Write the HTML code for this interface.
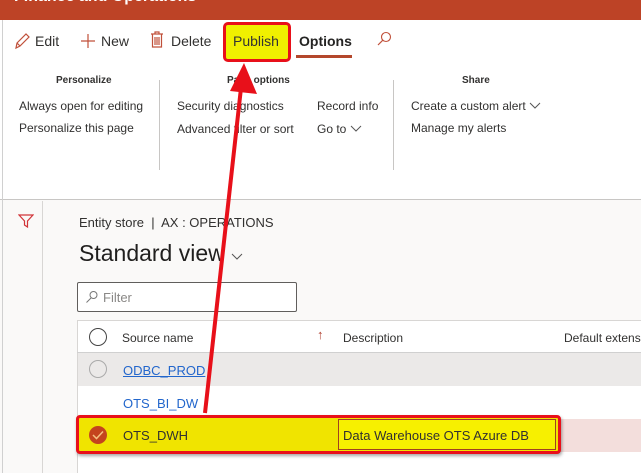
<!DOCTYPE html><html><head><style>
*{margin:0;padding:0;box-sizing:border-box}
body{width:641px;height:473px;overflow:hidden;background:#faf9f8;font-family:"Liberation Sans",sans-serif;position:relative;color:#323130}
.a{position:absolute;white-space:nowrap}
</style></head><body>
<div class="a" style="left:0;top:0;width:641px;height:20px;background:#bd4326"></div>
<div class="a" style="left:14px;top:-12px;color:#fff;font-size:16px;font-weight:bold">Finance and Operations</div>
<div class="a" style="left:0;top:20px;width:641px;height:180px;background:#fff;border-bottom:1px solid #c8c6c4"></div>
<div class="a" style="left:2px;top:20px;width:1px;height:453px;background:#d0d0d0"></div>
<svg class="a" style="left:14px;top:32px" width="16" height="18"><path d="M2 16 L3 11 L12 2 L15 5 L6 14 Z M3 11 L6 14" fill="none" stroke="#c0503a" stroke-width="1.2"/></svg>
<div class="a" style="left:35px;top:33px;font-size:14px">Edit</div>
<svg class="a" style="left:80px;top:33px" width="16" height="16"><path d="M8 1V15M1 8H15" stroke="#c0503a" stroke-width="1.2"/></svg>
<div class="a" style="left:101px;top:33px;font-size:14px">New</div>
<svg class="a" style="left:150px;top:31px" width="14" height="18"><path d="M1 3H13M5 3V1H9V3M2.5 3V16H11.5V3M5 6V14M7 6V14M9 6V14" fill="none" stroke="#c0503a" stroke-width="1.2"/></svg>
<div class="a" style="left:171px;top:33px;font-size:14px">Delete</div>
<div class="a" style="left:223px;top:22px;width:68px;height:40px;background:#f0f000;border:3px solid #e8101a;border-radius:5px"></div>
<div class="a" style="left:233px;top:33px;font-size:14px;color:#333">Publish</div>
<div class="a" style="left:299px;top:33px;font-size:14px;font-weight:bold;color:#252423">Options</div>
<div class="a" style="left:296px;top:55px;width:56px;height:3px;background:#b4472c"></div>
<svg class="a" style="left:376px;top:31px" width="16" height="16"><circle cx="10" cy="6" r="4.5" fill="none" stroke="#c0503a" stroke-width="1.1"/><path d="M7 9L2 14" stroke="#c0503a" stroke-width="1.2"/></svg>
<div class="a" style="left:56px;top:75px;font-size:10px;font-weight:bold">Personalize</div>
<div class="a" style="left:19px;top:99px;font-size:12px">Always open for editing</div>
<div class="a" style="left:19px;top:121px;font-size:12px">Personalize this page</div>
<div class="a" style="left:159px;top:80px;width:1px;height:90px;background:#c8c6c4"></div>
<div class="a" style="left:227px;top:75px;font-size:10px;font-weight:bold">Page options</div>
<div class="a" style="left:177px;top:99px;font-size:12px">Security diagnostics</div>
<div class="a" style="left:177px;top:122px;font-size:12px">Advanced filter or sort</div>
<div class="a" style="left:317px;top:99px;font-size:12px">Record info</div>
<div class="a" style="left:317px;top:122px;font-size:12px">Go to <svg width="12" height="8"><path d="M1 1L6 6L11 1" fill="none" stroke="#555"/></svg></div>
<div class="a" style="left:393px;top:80px;width:1px;height:90px;background:#c8c6c4"></div>
<div class="a" style="left:462px;top:75px;font-size:10px;font-weight:bold">Share</div>
<div class="a" style="left:411px;top:99px;font-size:12px">Create a custom alert <svg width="12" height="8"><path d="M1 1L6 6L11 1" fill="none" stroke="#555"/></svg></div>
<div class="a" style="left:411px;top:121px;font-size:12px">Manage my alerts</div>
<div class="a" style="left:42px;top:201px;width:1px;height:272px;background:#d8d6d4"></div>
<svg class="a" style="left:18px;top:213px" width="16" height="16"><path d="M1 2H15L9.5 8V14L6.5 12V8Z" fill="none" stroke="#d13438" stroke-width="1.2"/></svg>
<div class="a" style="left:79px;top:215px;font-size:13px;color:#323130">Entity store &nbsp;|&nbsp; AX : OPERATIONS</div>
<div class="a" style="left:79px;top:240px;font-size:23px;color:#201f1e">Standard view <svg width="12" height="8"><path d="M1 1L6 6L11 1" fill="none" stroke="#555"/></svg></div>
<div class="a" style="left:77px;top:282px;width:220px;height:30px;background:#fff;border:1px solid #605e5c;border-radius:2px"></div>
<svg class="a" style="left:85px;top:290px" width="14" height="14"><circle cx="8.5" cy="5" r="3.5" fill="none" stroke="#777"/><path d="M6 8L1.5 12.5" stroke="#777"/></svg>
<div class="a" style="left:103px;top:290px;font-size:13px;color:#8a8886">Filter</div>
<div class="a" style="left:77px;top:320px;width:564px;height:153px;background:#fff;border-left:1px solid #d8d6d4;border-top:1px solid #d8d6d4"></div>
<div class="a" style="left:77px;top:352px;width:564px;height:1px;background:#d0d0d0"></div>
<div class="a" style="left:89px;top:328px;width:18px;height:18px;border:1.5px solid #444;border-radius:50%"></div>
<div class="a" style="left:122px;top:331px;font-size:12px">Source name</div>
<div class="a" style="left:317px;top:327px;font-size:13px;color:#b04030">&#8593;</div>
<div class="a" style="left:343px;top:331px;font-size:12px">Description</div>
<div class="a" style="left:564px;top:331px;font-size:12px">Default extens</div>
<div class="a" style="left:78px;top:353px;width:563px;height:33px;background:#ebe9e8"></div>
<div class="a" style="left:89px;top:360px;width:18px;height:18px;border:1.5px solid #aaa;border-radius:50%"></div>
<div class="a" style="left:123px;top:363px;font-size:13px;color:#2266cc;text-decoration:underline">ODBC_PROD</div>
<div class="a" style="left:123px;top:396px;font-size:13px;color:#2266cc">OTS_BI_DW</div>
<div class="a" style="left:78px;top:419px;width:563px;height:33px;background:#f3dedc"></div>
<div class="a" style="left:76px;top:415px;width:485px;height:39px;background:#f0e400;border:3px solid #e8101a;border-radius:4px;box-shadow:1px 2px 3px rgba(0,0,0,.35)"></div>
<div class="a" style="left:338px;top:419px;width:218px;height:31px;border:1px solid #a04020;background:#f7f000"></div>
<div class="a" style="left:89px;top:426px;width:18px;height:18px;background:#c4441e;border-radius:50%"></div>
<svg class="a" style="left:92px;top:430px" width="12" height="10"><path d="M1 5L4.5 8.5L11 1.5" fill="none" stroke="#f5c080" stroke-width="1.5"/></svg>
<div class="a" style="left:123px;top:428px;font-size:13px">OTS_DWH</div>
<div class="a" style="left:343px;top:428px;font-size:13px">Data Warehouse OTS Azure DB</div>
<svg class="a" style="left:0;top:0" width="641" height="473"><path d="M205 413L241 88" stroke="#e8101a" stroke-width="4" fill="none"/><path d="M244 63L257 94L230 91Z" fill="#e8101a"/></svg>
</body></html>
